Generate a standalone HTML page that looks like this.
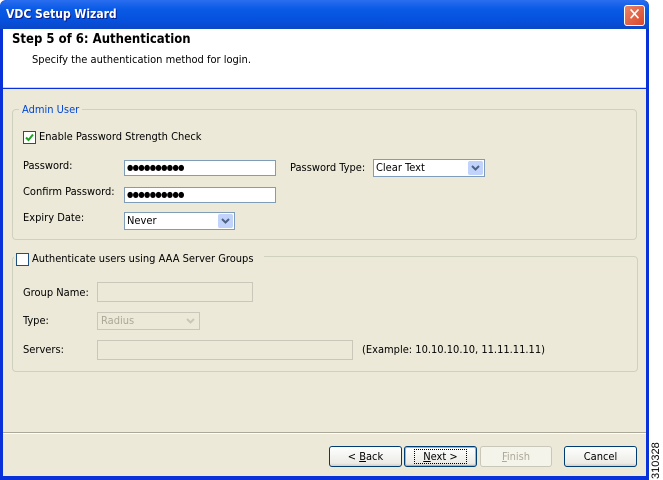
<!DOCTYPE html>
<html><head><style>
*{margin:0;padding:0;box-sizing:border-box}
body{width:663px;height:480px;background:#fff;position:relative;overflow:hidden;font-family:Tahoma,"DejaVu Sans Condensed","Liberation Sans",sans-serif;font-size:11px;color:#000}
.a{position:absolute}
.win{left:0;top:0;width:649px;height:480px;background:#0831d9;border-radius:6px 6px 0 0}
.title{left:0;top:0;width:649px;height:29px;background:linear-gradient(#2a6ef0,#0a5be6 30%,#0551dd 70%,#0b47c7);border-radius:7px 7px 0 0}
.tt{left:6px;top:7px;color:#fff;font-weight:bold;font-size:12px;font-family:"DejaVu Sans Condensed","Liberation Sans",sans-serif;text-shadow:1px 1px #0a1e8c}
.close{left:624px;top:5px;width:21px;height:21px;background:linear-gradient(135deg,#e98566,#d9462a);border:1px solid #fff;border-radius:3px;color:#fff;text-align:center;font-size:17px;line-height:19px;font-weight:bold}
.hdr{left:3px;top:29px;width:643px;height:59px;background:#fff;border-bottom:1px solid #d6d3c6}
.body{left:3px;top:89px;width:643px;height:387px;background:#ece9d8}
.grp{border:1px solid #d0d0bf;border-radius:4px}
.inp{background:#fff;border:1px solid #7f9db9;height:16px}
.dis{background:#ece9d8;border:1px solid #c9c7ba}
.sel{background:#fff;border:1px solid #7f9db9;height:18px;padding-left:2px;line-height:16px}
.arr{position:absolute;right:1px;top:1px;width:15px;height:14px;background:#c1d3fb;border-radius:2px}
.arr svg,.darr svg{position:absolute;left:3px;top:4px}
.dots{font-size:8px;letter-spacing:-0.6px;line-height:14px;padding-left:2px}
.btn{height:21px;border:1px solid #003c74;border-radius:3px;background:linear-gradient(#fff,#ecebe6 85%,#d6d0c5);text-align:center;line-height:19px}
.cb{width:13px;height:13px;border:1px solid #1c5180;background:#fff}
</style></head><body>
<div class="a win"></div>
<div class="a title"></div>
<div class="a tt">VDC Setup Wizard</div>
<div class="a close">✕</div>
<div class="a hdr"></div>
<div class="a" style="left:12px;top:32px;font-weight:bold;font-size:13px">Step 5 of 6: Authentication</div>
<div class="a" style="left:32px;top:53px">Specify the authentication method for login.</div>
<div class="a body"></div>
<div class="a grp" style="left:12px;top:109px;width:625px;height:131px"></div>
<div class="a" style="left:19px;top:103px;background:#ece9d8;color:#0046d5;padding:0 3px">Admin User</div>
<div class="a cb" style="left:23px;top:131px"><svg width="11" height="11" style="position:absolute;left:0;top:0"><path d="M2 5.5 L4.5 8 L9 2.5" stroke="#21a121" stroke-width="2" fill="none"/></svg></div>
<div class="a" style="left:39px;top:130px">Enable Password Strength Check</div>
<div class="a" style="left:23px;top:159px">Password:</div>
<div class="a inp dots" style="left:124px;top:160px;width:152px">●●●●●●●●●●</div>
<div class="a" style="left:290px;top:161px">Password Type:</div>
<div class="a sel" style="left:373px;top:159px;width:112px">Clear Text<div class="arr"><svg width="9" height="6"><path d="M1 1 L4.5 4.5 L8 1" stroke="#4d6185" stroke-width="2" fill="none"/></svg></div></div>
<div class="a" style="left:23px;top:185px">Confirm Password:</div>
<div class="a inp dots" style="left:124px;top:187px;width:152px">●●●●●●●●●●</div>
<div class="a" style="left:23px;top:211px">Expiry Date:</div>
<div class="a sel" style="left:124px;top:212px;width:111px">Never<div class="arr"><svg width="9" height="6"><path d="M1 1 L4.5 4.5 L8 1" stroke="#4d6185" stroke-width="2" fill="none"/></svg></div></div>
<div class="a grp" style="left:12px;top:256px;width:626px;height:116px"></div>
<div class="a" style="left:14px;top:252px;width:250px;height:14px;background:#ece9d8"></div>
<div class="a cb" style="left:16px;top:253px"></div>
<div class="a" style="left:32px;top:252px">Authenticate users using AAA Server Groups</div>
<div class="a" style="left:23px;top:286px">Group Name:</div>
<div class="a dis" style="left:97px;top:282px;width:156px;height:20px"></div>
<div class="a" style="left:23px;top:314px">Type:</div>
<div class="a dis" style="left:97px;top:312px;width:103px;height:18px;color:#aca899;padding-left:3px;line-height:16px">Radius<span class="darr" style="position:absolute;right:1px;top:1px;width:15px;height:14px"><svg width="9" height="6"><path d="M1 1 L4.5 4.5 L8 1" stroke="#c9c7ba" stroke-width="2" fill="none"/></svg></span></div>
<div class="a" style="left:23px;top:343px">Servers:</div>
<div class="a dis" style="left:97px;top:340px;width:256px;height:20px"></div>
<div class="a" style="left:362px;top:343px">(Example: 10.10.10.10, 11.11.11.11)</div>
<div class="a" style="left:3px;top:432px;width:643px;height:2px;border-top:1px solid #aca899;border-bottom:1px solid #fff"></div>
<div class="a btn" style="left:329px;top:446px;width:73px">&lt; <u>B</u>ack</div>
<div class="a btn" style="left:404px;top:446px;width:73px;box-shadow:inset 0 0 0 1px #97b4e8"><span style="outline:1px dotted #000;padding:0 8px"><u>N</u>ext &gt;</span></div>
<div class="a btn" style="left:480px;top:446px;width:72px;border-color:#c9c7ba;background:#f5f4ea;color:#aca899"><u>F</u>inish</div>
<div class="a btn" style="left:564px;top:446px;width:73px">Cancel</div>
<div class="a" style="left:650px;transform:rotate(-90deg);transform-origin:0 0;top:479px;font-family:'Liberation Sans',sans-serif;font-size:11px">310328</div>
</body></html>
